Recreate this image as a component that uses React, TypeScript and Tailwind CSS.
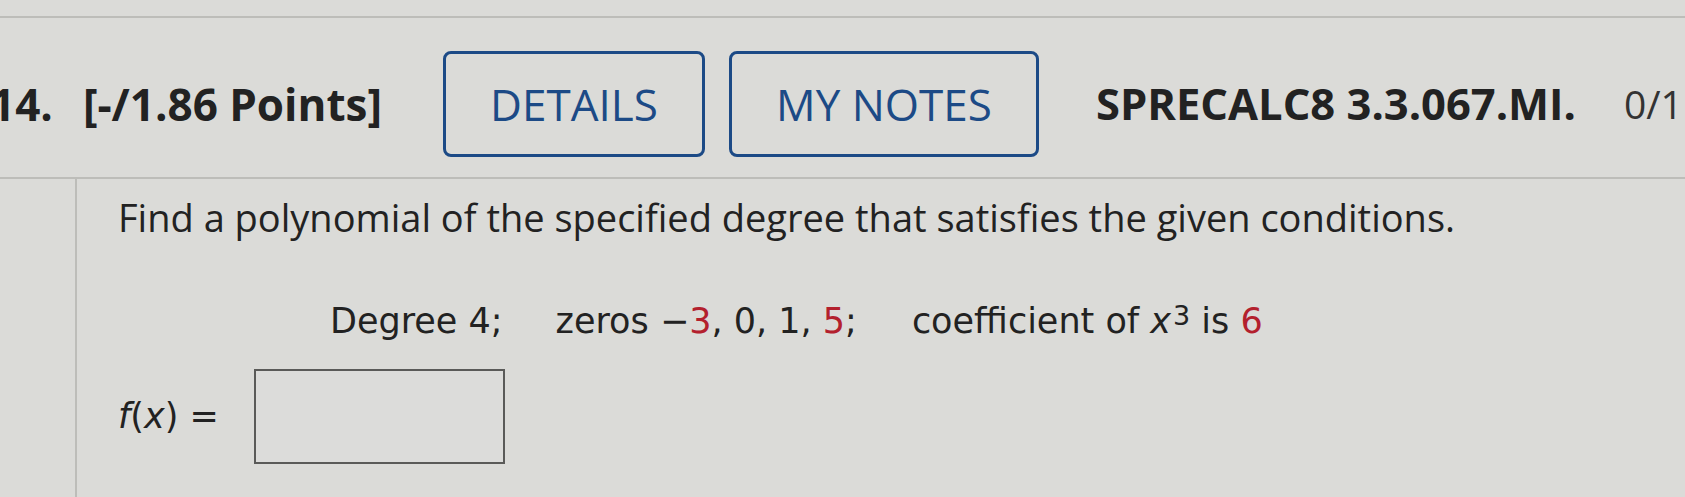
import React from "react";

export default function App() {
  return (
    <div className="w-[1685px] h-[497px] overflow-hidden bg-[#dbdbd8] font-['Open_Sans',sans-serif] text-[#222]">
      {/* question header */}
      <div className="mt-[16px] h-[163px] border-y-2 border-[#bdbdb9] flex items-center overflow-hidden">
        <div className="flex items-center shrink-0 whitespace-nowrap -ml-[10px] pt-[12px]">
          <span className="shrink-0 text-[44px] font-bold leading-none">14.</span>
          <span className="shrink-0 ml-[30px] text-[44px] font-bold leading-none">[-/1.86 Points]</span>
          <button className="shrink-0 ml-[61px] w-[262px] h-[106px] border-[3.5px] border-[#1c4a86] rounded-[8px] text-[44px] text-[#1c4a86] leading-none">
            DETAILS
          </button>
          <button className="shrink-0 ml-[24px] w-[310px] h-[106px] border-[3.5px] border-[#1c4a86] rounded-[8px] text-[44px] text-[#1c4a86] leading-none">
            MY NOTES
          </button>
          <span className="shrink-0 ml-[57px] text-[43.5px] font-bold leading-none">SPRECALC8 3.3.067.MI.</span>
          <span className="shrink-0 ml-[48px] text-[39px] text-[#333] leading-none">0/1</span>
        </div>
      </div>

      {/* question body */}
      <div className="flex h-[320px]">
        <div className="w-[77px] shrink-0 border-r-2 border-[#bdbdb9]" />
        <div className="pl-[41px] pt-[14px]">
          <p className="text-[38px] leading-[48px] whitespace-nowrap">
            Find a polynomial of the specified degree that satisfies the given conditions.
          </p>
          <div className="mt-[60px] ml-[212px] font-['DejaVu_Sans',Verdana,sans-serif] text-[35px] leading-[40px] whitespace-nowrap">
            <span>Degree 4;</span>
            <span className="ml-[53px]">
              zeros −<span className="text-[#b3202d]">3</span>, 0, 1, <span className="text-[#b3202d]">5</span>;
            </span>
            <span className="ml-[55px]">
              coefficient of <i>x</i>
              <sup className="text-[27px] relative -top-[8px] ml-[2px]">3</sup> is <span className="text-[#b3202d]">6</span>
            </span>
          </div>
          <div className="mt-[28px] flex items-center font-['DejaVu_Sans',Verdana,sans-serif] text-[35px]">
            <span>
              <i>f</i>(<i>x</i>) =
            </span>
            <div className="ml-[35px] w-[251px] h-[95px] border-2 border-[#5a5a58] bg-[#dcdcda]" />
          </div>
        </div>
      </div>
    </div>
  );
}
